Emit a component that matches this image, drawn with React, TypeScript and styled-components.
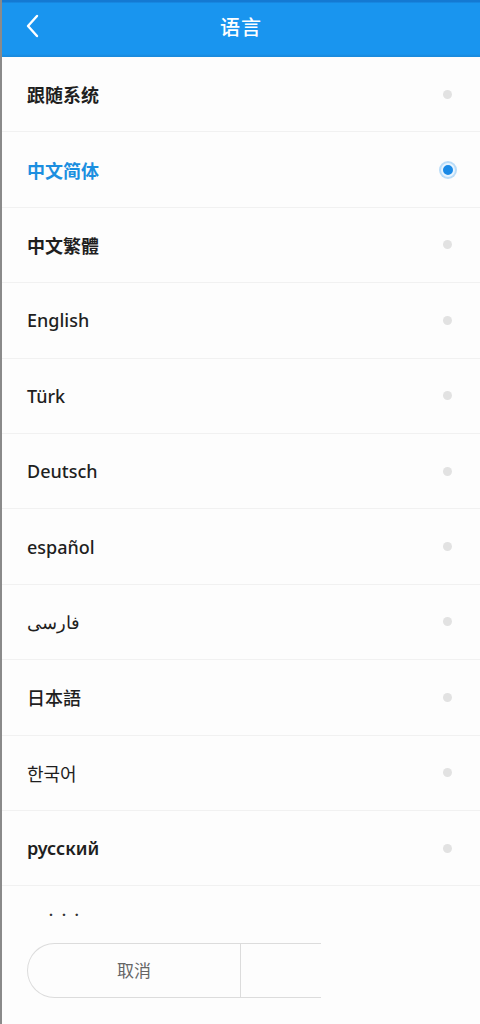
import styled, { createGlobalStyle } from "styled-components";

const GlobalStyle = createGlobalStyle`
    html, body {
        margin: 0;
        padding: 0;
        background: #fdfdfd;
    }
    * {
        box-sizing: border-box;
    }
`;

const Page = styled.div`
    width: 480px;
    height: 1024px;
    overflow: hidden;
    background: #fdfdfd;
    border-left: 2px solid #8a8a8a;
    font-family: "Noto Sans", "Noto Sans CJK SC", sans-serif;
`;

const Header = styled.header`
    height: 57px;
    padding-bottom: 5px;
    display: flex;
    align-items: center;
    justify-content: center;
    position: relative;
    background: linear-gradient(to bottom, #1479d2 0, #1479d2 2px, #1995ef 3px, #1995ef 54px, #1a8bde 56px);
`;

const BackButton = styled.div`
    position: absolute;
    left: 18px;
    top: 13px;
    width: 24px;
    height: 26px;
    display: flex;
    align-items: center;
    justify-content: center;
`;

const Title = styled.h1`
    margin: 0;
    color: #ffffff;
    font-size: 20px;
    font-weight: 500;
    font-family: "Noto Sans CJK SC", sans-serif;
    letter-spacing: 1px;
`;

const List = styled.ul`
    list-style: none;
    margin: 0;
    padding: 0;
`;

const Row = styled.li`
    height: 75.4px;
    display: flex;
    align-items: center;
    justify-content: space-between;
    padding: 0 28px 0 25px;
    border-bottom: 1.5px solid #f1f1f1;
`;

const Label = styled.span<{ $active?: boolean; $weight: number }>`
    font-size: 18px;
    font-weight: ${(p) => p.$weight};
    color: ${(p) => (p.$active ? "#1b8fe0" : "#1f1f1f")};
    font-family: "Noto Sans", "Noto Sans CJK SC", "Noto Sans CJK KR", sans-serif;
`;

const Dot = styled.span<{ $active?: boolean }>`
    width: ${(p) => (p.$active ? "14px" : "9px")};
    height: ${(p) => (p.$active ? "14px" : "9px")};
    margin-right: ${(p) => (p.$active ? "-2.5px" : "0")};
    border-radius: 50%;
    background: ${(p) => (p.$active ? "#1a8ae6" : "#e2e2e2")};
    box-shadow: ${(p) => (p.$active ? "0 0 0 2px #b9dcf8" : "none")};
    border: ${(p) => (p.$active ? "2px solid #e8f4fe" : "none")};
`;

const More = styled.div`
    height: 57px;
    padding: 22px 0 0 47px;
    font-size: 14px;
    font-weight: 700;
    letter-spacing: 9px;
    color: #333;
    line-height: 1;
`;

const ButtonBar = styled.div`
    margin-left: 25px;
    width: 294px;
    height: 55px;
    display: flex;
    border: 1.5px solid #dcdcdc;
    border-right: none;
    border-radius: 28px 0 0 28px;
`;

const BarButton = styled.button<{ $divider?: boolean }>`
    flex: ${(p) => (p.$divider ? "0 0 213px" : "1")};
    border: none;
    border-right: ${(p) => (p.$divider ? "1.5px solid #dcdcdc" : "none")};
    background: transparent;
    font-size: 17px;
    color: #666;
    font-family: "Noto Sans CJK SC", sans-serif;
    padding: 0 0 2px 0;
`;

const languages = [
    { name: "跟随系统", weight: 600 },
    { name: "中文简体", weight: 600, active: true },
    { name: "中文繁體", weight: 600 },
    { name: "English", weight: 500 },
    { name: "Türk", weight: 500 },
    { name: "Deutsch", weight: 500 },
    { name: "español", weight: 500 },
    { name: "فارسی", weight: 400 },
    { name: "日本語", weight: 500 },
    { name: "한국어", weight: 400 },
    { name: "русский", weight: 600 },
];

export default function App() {
    return (
        <>
            <GlobalStyle />
            <Page>
                <Header>
                    <BackButton>
                        <svg width="14" height="24" viewBox="0 0 14 24">
                            <path
                                d="M12 2 L3 12 L12 22"
                                fill="none"
                                stroke="#fff"
                                strokeWidth="2.4"
                                strokeLinecap="round"
                                strokeLinejoin="round"
                            />
                        </svg>
                    </BackButton>
                    <Title>语言</Title>
                </Header>
                <List>
                    {languages.map((l) => (
                        <Row key={l.name}>
                            <Label $active={l.active} $weight={l.weight}>
                                {l.name}
                            </Label>
                            <Dot $active={l.active} />
                        </Row>
                    ))}
                </List>
                <More>···</More>
                <ButtonBar>
                    <BarButton $divider>取消</BarButton>
                    <BarButton />
                </ButtonBar>
            </Page>
        </>
    );
}
